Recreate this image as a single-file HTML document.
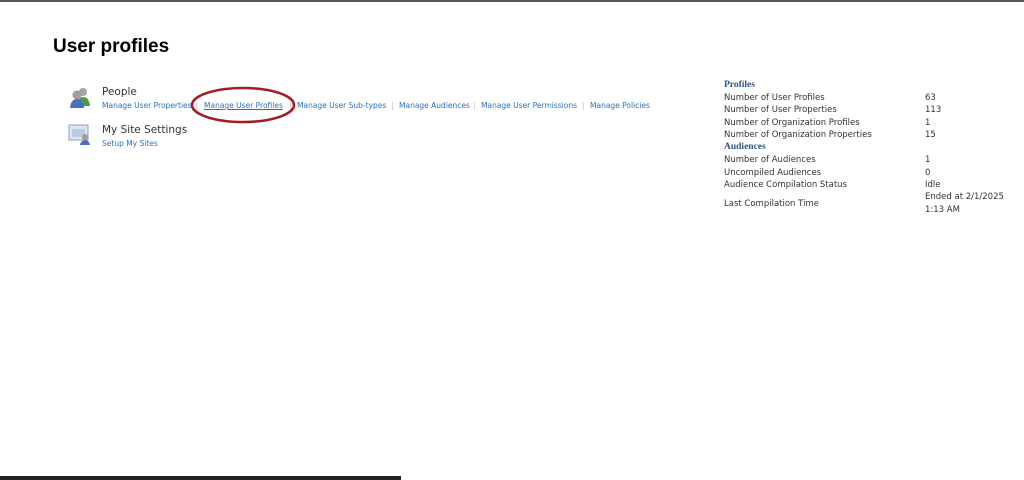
<!DOCTYPE html>
<html><head><style>
body{margin:0;width:1024px;height:480px;background:#fff;position:relative;overflow:hidden;font-family:"DejaVu Sans","Liberation Sans",sans-serif}
.top{position:absolute;left:0;top:0;width:1024px;height:2px;background:#555}
.bot{position:absolute;left:0;top:476px;width:401px;height:4px;background:#222}
h1{position:absolute;left:53px;top:36px;margin:0;font:bold 19px "Liberation Sans",sans-serif;color:#000}
.t{position:absolute;font-size:10.5px;color:#333;white-space:nowrap}
.l{position:absolute;font-size:7.5px;color:#2a72b5;white-space:nowrap;top:101px}
.sep{color:#bbb}
.r{position:absolute;font-size:8.5px;color:#333;white-space:nowrap;font-family:"DejaVu Sans",sans-serif}
.h{color:#2c5783;font-weight:bold;font-family:"Liberation Serif",serif;font-size:9.5px}
</style></head><body>
<div class="top"></div>
<h1>User profiles</h1>
<svg style="position:absolute;left:68px;top:86px" width="24" height="22">
<circle cx="15" cy="6" r="4" fill="#9a9"/><path d="M9 20 Q10 11 15 11 Q21 11 22 20Z" fill="#4a9a4a"/>
<circle cx="9" cy="9" r="4.5" fill="#a99"/><path d="M2 22 Q3 13 9 13 Q15 13 16 22Z" fill="#4a6fbf"/></svg>
<svg style="position:absolute;left:68px;top:124px" width="24" height="22">
<rect x="1" y="1" width="19" height="15" fill="#dde5f0" stroke="#8aa0c0"/><rect x="4" y="5" width="13" height="8" fill="#b8cce4"/>
<circle cx="17" cy="13" r="3" fill="#a99"/><path d="M12 21 Q13 16 17 16 Q21 16 22 21Z" fill="#4a6fbf"/></svg>
<div class="t" style="left:102px;top:86px">People</div>
<div class="l" style="left:102px">Manage User Properties</div>
<div class="l sep" style="left:195px">|</div>
<div class="l" style="left:204px;text-decoration:underline">Manage User Profiles</div>
<div class="l sep" style="left:289px">|</div>
<div class="l" style="left:297px">Manage User Sub-types</div>
<div class="l sep" style="left:391px">|</div>
<div class="l" style="left:399px">Manage Audiences</div>
<div class="l sep" style="left:473px">|</div>
<div class="l" style="left:481px">Manage User Permissions</div>
<div class="l sep" style="left:582px">|</div>
<div class="l" style="left:590px">Manage Policies</div>
<svg style="position:absolute;left:190px;top:86px" width="106" height="38"><ellipse cx="53" cy="19" rx="51" ry="17" fill="none" stroke="#a11d22" stroke-width="2.5"/></svg>
<div class="t" style="left:102px;top:124px">My Site Settings</div>
<div class="l" style="left:102px;top:139px">Setup My Sites</div>
<div class="r h" style="left:724px;top:80px">Profiles</div>
<div class="r" style="left:724px;top:93px">Number of User Profiles</div><div class="r" style="left:925px;top:93px">63</div>
<div class="r" style="left:724px;top:105px">Number of User Properties</div><div class="r" style="left:925px;top:105px">113</div>
<div class="r" style="left:724px;top:118px">Number of Organization Profiles</div><div class="r" style="left:925px;top:118px">1</div>
<div class="r" style="left:724px;top:130px">Number of Organization Properties</div><div class="r" style="left:925px;top:130px">15</div>
<div class="r h" style="left:724px;top:142px">Audiences</div>
<div class="r" style="left:724px;top:155px">Number of Audiences</div><div class="r" style="left:925px;top:155px">1</div>
<div class="r" style="left:724px;top:168px">Uncompiled Audiences</div><div class="r" style="left:925px;top:168px">0</div>
<div class="r" style="left:724px;top:180px">Audience Compilation Status</div><div class="r" style="left:925px;top:180px">Idle</div>
<div class="r" style="left:724px;top:199px">Last Compilation Time</div>
<div class="r" style="left:925px;top:192px">Ended at 2/1/2025</div>
<div class="r" style="left:925px;top:205px">1:13 AM</div>
<div class="bot"></div>
</body></html>
